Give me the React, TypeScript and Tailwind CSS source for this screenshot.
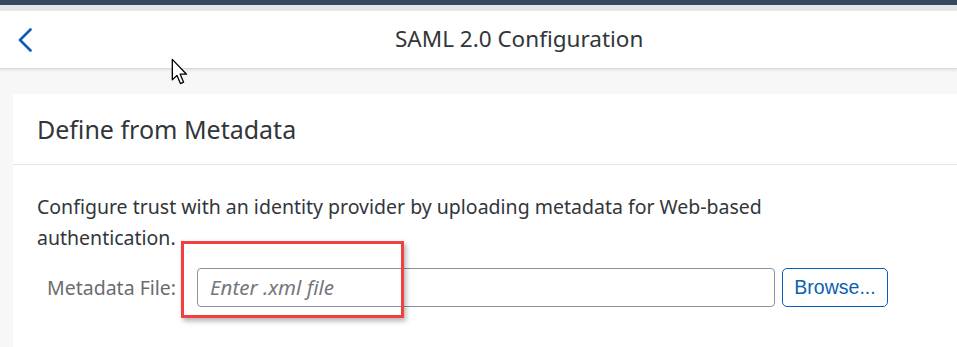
import React from 'react';

function Cursor() {
  return (
    <svg className="absolute left-[171px] top-[58px]" width="21" height="29" viewBox="0 0 16 22">
      <path d="M1 1 L1 16.5 L4.6 13.2 L7.2 19.4 L9.6 18.4 L7 12.3 L11.8 12.3 Z" fill="#fff" stroke="#000" strokeWidth="1" strokeLinejoin="round" />
    </svg>
  );
}

function BackChevron() {
  return (
    <svg width="16" height="24" viewBox="0 0 16 24" fill="none">
      <path d="M13.5 1.5 L3 12 L13.5 22.5" stroke="#0a5fb4" strokeWidth="2.6" strokeLinecap="round" strokeLinejoin="round" />
    </svg>
  );
}

export default function App() {
  return (
    <div className="relative w-[957px] h-[347px] overflow-hidden bg-[#f7f7f7] text-[#32363a] font-['Noto_Sans',_'Liberation_Sans',_sans-serif]">
      <div className="h-[5px] bg-[#354a5f]" />
      <div className="h-[6px] bg-[#e4e6e8]" />
      <header className="h-[58px] bg-white flex items-center border-b border-[#d9d9d9] shadow-[0_2px_2px_rgba(0,0,0,0.06)]">
        <button className="ml-[17px] flex items-center">
          <BackChevron />
        </button>
        <h1 className="ml-[362px] text-[22.5px] leading-none">SAML 2.0 Configuration</h1>
      </header>

      <div className="pt-[25px] pl-[13px]">
        <section className="bg-white h-[300px]">
          <div className="h-[71px] px-[24px] flex items-center border-b border-[#e5e5e5]">
            <h2 className="text-[25px] leading-none">Define from Metadata</h2>
          </div>
          <div className="px-[24px] pt-[26px]">
            <p className="text-[19.5px] leading-[31px] w-[780px]">
              Configure trust with an identity provider by uploading metadata for Web-based authentication.
            </p>
            <div className="mt-[15px] flex items-center">
              <label className="ml-[10px] w-[150px] text-[19.5px] text-[#6a6d70]">Metadata File:</label>
              <div className="w-[578px] h-[39px] border border-[#89919a] rounded-[4px] flex items-center px-[12px]">
                <span className="text-[20.5px] italic text-[#74777a]">Enter .xml file</span>
              </div>
              <button className="ml-[7px] w-[106px] h-[39px] border border-[#0a5fb4] rounded-[5px] text-[#0a5fb4] text-[19.5px] font-['Liberation_Sans',_sans-serif]">
                Browse...
              </button>
            </div>
          </div>
        </section>
      </div>

      <div className="absolute left-[181px] top-[241px] w-[223px] h-[77px] border-[3px] border-[#f2403f] shadow-[2px_3px_5px_rgba(0,0,0,0.3)]" />
      <Cursor />
    </div>
  );
}
